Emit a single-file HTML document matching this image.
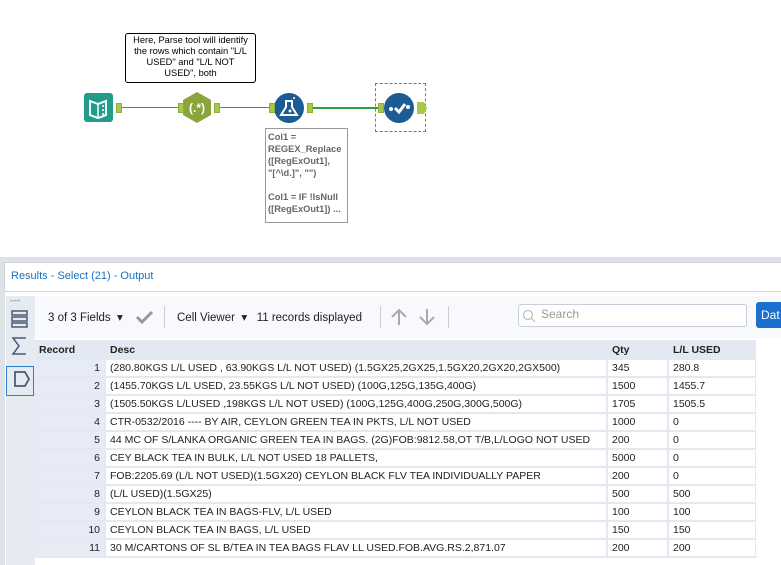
<!DOCTYPE html><html><head><style>
*{margin:0;padding:0;box-sizing:border-box}
body{width:781px;height:565px;position:relative;background:#fff;font-family:"Liberation Sans",sans-serif;overflow:hidden}
.a{position:absolute}
.tab{position:absolute;width:6px;height:10px;background:#a8c84a;border:1px solid #8fae35}
table{border-collapse:separate;border-spacing:2px 2px;position:absolute;left:33px;top:340px;font-size:10.5px;color:#222;table-layout:fixed;width:724px}
td{height:16px;padding:0 4px;background:#fff;white-space:nowrap;line-height:16px;overflow:hidden}
th{height:16px;padding:0 4px;background:#e3e9f3;text-align:left;font-weight:bold;line-height:16px}
td.r{background:#e6ebf6;text-align:right}
</style></head><body>
<!-- canvas -->
<div class="a" style="left:125px;top:33px;width:131px;height:50px;border:1px solid #000;border-radius:3px;font-size:9.3px;line-height:11px;text-align:center;padding-top:1px;white-space:nowrap">Here, Parse tool will identify<br>the rows which contain "L/L<br>USED" and "L/L NOT<br>USED", both</div>
<div class="a" style="left:122px;top:107px;width:62px;height:1px;background:#777"></div>
<div class="a" style="left:217px;top:107px;width:60px;height:1px;background:#777"></div>
<div class="a" style="left:312px;top:107px;width:66px;height:2px;background:#2aa040"></div>
<div class="a" style="left:84px;top:93px;width:29px;height:29px;background:#1f9c8a;border-radius:3px"></div>
<svg class="a" style="left:84px;top:93px" width="29" height="29"><path d="M6 8 L14 11 L22 8 L22 22 L14 25 L6 22Z" fill="none" stroke="#fff" stroke-width="2"/><line x1="14" y1="11" x2="14" y2="25" stroke="#fff" stroke-width="1.5"/><circle cx="19" cy="13" r="1" fill="#fff"/><circle cx="19" cy="17" r="1" fill="#fff"/><circle cx="19" cy="21" r="1" fill="#fff"/></svg>
<div class="tab" style="left:116px;top:103px"></div>
<svg class="a" style="left:181px;top:92px" width="32" height="31"><polygon points="16,0 30,8 30,23 16,31 2,23 2,8" fill="#8aa53e"/><text x="16" y="20" fill="#fff" font-size="12" font-weight="bold" text-anchor="middle" font-family="Liberation Sans">(.*)</text></svg>
<div class="tab" style="left:178px;top:103px"></div>
<div class="tab" style="left:214px;top:103px"></div>
<div class="a" style="left:274px;top:93px;width:30px;height:30px;border-radius:50%;background:#1c5b94"></div>
<svg class="a" style="left:274px;top:93px" width="30" height="30"><path d="M12 8 L12 14 L7 22 L23 22 L18 14 L18 8Z" fill="none" stroke="#fff" stroke-width="2"/><circle cx="16" cy="18" r="1.5" fill="#fff"/><circle cx="20" cy="5" r="1" fill="#fff"/></svg>
<div class="tab" style="left:269px;top:103px"></div>
<div class="tab" style="left:307px;top:103px"></div>
<div class="a" style="left:375px;top:83px;width:51px;height:49px;border:1px dashed #3a8ad8"></div>
<div class="a" style="left:384px;top:93px;width:30px;height:30px;border-radius:50%;background:#1c5b94"></div>
<svg class="a" style="left:384px;top:93px" width="30" height="30"><circle cx="7" cy="16" r="2" fill="#fff"/><circle cx="24" cy="14" r="2" fill="#fff"/><path d="M11 15 L15 19 L21 11" fill="none" stroke="#fff" stroke-width="3"/></svg>
<div class="tab" style="left:378px;top:103px"></div>
<svg class="a" style="left:417px;top:102px" width="11" height="13"><path d="M0 0 L7 0 L10 6 L7 12 L0 12Z" fill="#a8c84a"/></svg>
<div class="a" style="left:265px;top:128px;width:83px;height:95px;border:1px solid #999;font-size:9.3px;line-height:12px;color:#666;font-weight:bold;padding:2px 2px;white-space:nowrap">Col1 =<br>REGEX_Replace<br>([RegExOut1],<br>"[^\d.]", "")<br><br>Col1 = IF !IsNull<br>([RegExOut1]) ...</div>
<!-- results -->
<div class="a" style="left:0;top:257px;width:781px;height:5px;background:#dde1e8"></div>
<div class="a" style="left:0;top:262px;width:5px;height:303px;background:#dde1e8"></div>
<div class="a" style="left:4px;top:262px;width:777px;height:30px;background:#fff;border:1px solid #d0d4da;border-right:none"></div>
<div class="a" style="left:11px;top:270px;font-size:11px;color:#1a6fc0">Results - Select (21) - Output</div>
<div class="a" style="left:5px;top:295px;width:776px;height:270px;background:#fff"></div>
<div class="a" style="left:6px;top:296px;width:29px;height:269px;background:#e6eaf1"></div>
<div class="a" style="left:10px;top:299px;font-size:6px;color:#aaa;letter-spacing:0">•••••</div>
<svg class="a" style="left:8px;top:308px" width="24" height="80"><g fill="none" stroke="#4a5b78" stroke-width="1.5"><rect x="4" y="3" width="15" height="4"/><rect x="4" y="9" width="15" height="4"/><rect x="4" y="15" width="15" height="4"/><path d="M18 30 L5 30 L11 38 L5 46 L18 46"/><path d="M7 64 L17 64 L21 71 L17 78 L7 78Z" stroke-width="1.8"/></g></svg>
<div class="a" style="left:6px;top:366px;width:28px;height:30px;border:1px solid #2d7fd0"></div>
<div class="a" style="left:35px;top:296px;width:746px;height:42px;background:#f7f9fc"></div>
<div class="a" style="left:48px;top:310px;font-size:11.5px;color:#222">3 of 3 Fields&nbsp;&nbsp;▾</div>
<svg class="a" style="left:135px;top:309px" width="20" height="16"><path d="M2 8 L7 13 L17 3" fill="none" stroke="#999" stroke-width="3"/></svg>
<div class="a" style="left:164px;top:306px;width:1px;height:22px;background:#ccc"></div>
<div class="a" style="left:177px;top:310px;font-size:11.5px;color:#222">Cell Viewer&nbsp;&nbsp;▾&nbsp;&nbsp;&nbsp;11 records displayed</div>
<div class="a" style="left:380px;top:306px;width:1px;height:22px;background:#ccc"></div>
<svg class="a" style="left:388px;top:307px" width="50" height="20"><g fill="none" stroke="#aaa" stroke-width="2"><path d="M11 18 L11 3 M4 10 L11 3 L18 10"/><path d="M39 2 L39 17 M32 10 L39 17 L46 10"/></g></svg>
<div class="a" style="left:448px;top:306px;width:1px;height:22px;background:#ccc"></div>
<div class="a" style="left:518px;top:304px;width:229px;height:23px;border:1px solid #c8cfdb;border-radius:3px;background:#fff"></div>
<svg class="a" style="left:522px;top:309px" width="14" height="14"><circle cx="6" cy="6" r="4.5" fill="none" stroke="#bbb" stroke-width="1.2"/><path d="M9 9 L13 13" stroke="#bbb" stroke-width="1.2"/></svg>
<div class="a" style="left:541px;top:307px;font-size:12px;color:#999">Search</div>
<div class="a" style="left:756px;top:302px;width:30px;height:26px;background:#1a6fd0;border-radius:3px;color:#fff;font-size:12px;padding:6px 0 0 5px">Dat</div>
<div class="a" style="left:35px;top:340px;width:721px;height:218px;background:#e3e9f3"></div>
<table>
<colgroup><col style="width:69px"><col style="width:500px"><col style="width:59px"><col style="width:86px"></colgroup>
<tr><th>Record</th><th>Desc</th><th>Qty</th><th>L/L USED</th></tr>
<tr><td class="r">1</td><td>(280.80KGS L/L USED , 63.90KGS L/L NOT USED) (1.5GX25,2GX25,1.5GX20,2GX20,2GX500)</td><td>345</td><td>280.8</td></tr>
<tr><td class="r">2</td><td>(1455.70KGS L/L USED, 23.55KGS L/L NOT USED) (100G,125G,135G,400G)</td><td>1500</td><td>1455.7</td></tr>
<tr><td class="r">3</td><td>(1505.50KGS L/LUSED ,198KGS L/L NOT USED) (100G,125G,400G,250G,300G,500G)</td><td>1705</td><td>1505.5</td></tr>
<tr><td class="r">4</td><td>CTR-0532/2016 ---- BY AIR, CEYLON GREEN TEA IN PKTS, L/L NOT USED</td><td>1000</td><td>0</td></tr>
<tr><td class="r">5</td><td>44 MC OF S/LANKA ORGANIC GREEN TEA IN BAGS. (2G)FOB:9812.58,OT T/B,L/LOGO NOT USED</td><td>200</td><td>0</td></tr>
<tr><td class="r">6</td><td>CEY BLACK TEA IN BULK, L/L NOT USED 18 PALLETS,</td><td>5000</td><td>0</td></tr>
<tr><td class="r">7</td><td>FOB:2205.69 (L/L NOT USED)(1.5GX20) CEYLON BLACK FLV TEA INDIVIDUALLY PAPER</td><td>200</td><td>0</td></tr>
<tr><td class="r">8</td><td>(L/L USED)(1.5GX25)</td><td>500</td><td>500</td></tr>
<tr><td class="r">9</td><td>CEYLON BLACK TEA IN BAGS-FLV, L/L USED</td><td>100</td><td>100</td></tr>
<tr><td class="r">10</td><td>CEYLON BLACK TEA IN BAGS, L/L USED</td><td>150</td><td>150</td></tr>
<tr><td class="r">11</td><td>30 M/CARTONS OF SL B/TEA IN TEA BAGS FLAV LL USED.FOB.AVG.RS.2,871.07</td><td>200</td><td>200</td></tr>
</table>
</body></html>
